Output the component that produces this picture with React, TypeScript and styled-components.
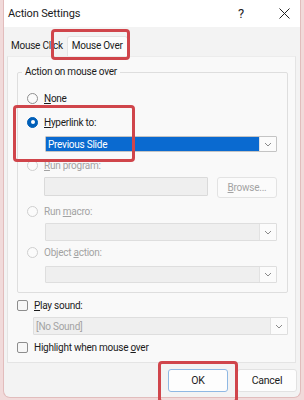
import React from 'react'
import styled, { createGlobalStyle } from 'styled-components'

const GlobalStyle = createGlobalStyle`
  html, body {
    margin: 0;
    padding: 0;
    background: #f1dada;
  }
  body {
    font-family: Roboto, "Noto Sans", sans-serif;
    font-size: 10px;
    letter-spacing: -0.25px;
    color: #1b1b1b;
  }
`

const Screen = styled.div`
  position: relative;
  width: 304px;
  height: 400px;
  box-sizing: border-box;
  padding-left: 3px;
  overflow: hidden;
  background: #f1dada;
`

const Window = styled.div`
  display: flex;
  flex-direction: column;
  width: 298px;
  height: 398px;
  box-sizing: border-box;
  background: #f3f3f3;
  border: 1px solid #e2bcbc;
  border-top: none;
  border-radius: 0 0 7px 7px;
  overflow: hidden;
`

const TitleBar = styled.div`
  display: flex;
  align-items: center;
  height: 27px;
  flex-shrink: 0;
  padding: 0 9px 0 4px;
  background: #ffffff;
  font-size: 11px;
  letter-spacing: -0.15px;
`

const Title = styled.div`
  flex: 1;
`

const TitleButton = styled.div<{ $gap?: number }>`
  display: flex;
  align-items: center;
  justify-content: center;
  width: 14px;
  height: 14px;
  margin-left: ${(p) => p.$gap ?? 0}px;
  font-size: 13px;
  color: #222;
`

const TabStrip = styled.div`
  display: flex;
  align-items: flex-end;
  gap: 3px;
  height: 29px;
  flex-shrink: 0;
  padding-left: 6px;
`

const Tab = styled.div<{ $active?: boolean }>`
  height: 19px;
  line-height: 18px;
  padding: 0 ${(p) => (p.$active ? 4 : 0)}px;
  background: ${(p) => (p.$active ? '#fcfcfc' : 'transparent')};
  border: 1px solid ${(p) => (p.$active ? '#e4e4e4' : 'transparent')};
  border-bottom: none;
  border-radius: 3px 3px 0 0;
`

const Panel = styled.div`
  display: flex;
  flex-direction: column;
  height: 307px;
  flex-shrink: 0;
  box-sizing: border-box;
  margin: 0 4px 0 3px;
  padding: 8px 7px 0 9px;
  background: #f9f9f9;
  border: 1px solid #e4e4e4;
  border-top-color: #ececec;
`

const Group = styled.fieldset`
  display: flex;
  flex-direction: column;
  margin: 0;
  padding: 0 10px 9px 9px;
  border: 1px solid #dedede;
  border-radius: 2px;
  min-width: 0;
`

const Legend = styled.legend`
  margin-left: -5px;
  padding: 0 3px;
  line-height: 14px;
`

const OptionRow = styled.div<{ $top: number; $indent?: number }>`
  display: flex;
  align-items: center;
  gap: 6px;
  height: 18px;
  margin-top: ${(p) => p.$top}px;
  margin-left: ${(p) => p.$indent ?? 0}px;
`

const Label = styled.span<{ $disabled?: boolean }>`
  color: ${(p) => (p.$disabled ? '#a3a3a3' : '#1b1b1b')};
  white-space: nowrap;
`

const Key = styled.span`
  text-decoration: underline;
  text-underline-offset: 1px;
`

const Radio = styled.span<{ $checked?: boolean; $disabled?: boolean }>`
  position: relative;
  width: 11px;
  height: 11px;
  flex-shrink: 0;
  box-sizing: border-box;
  border-radius: 50%;
  background: ${(p) => (p.$checked ? '#005fb8' : '#fbfbfb')};
  border: 1px solid
    ${(p) => (p.$checked ? '#005fb8' : p.$disabled ? '#cfcfcf' : '#8f8f8f')};

  &::after {
    content: '';
    display: ${(p) => (p.$checked ? 'block' : 'none')};
    position: absolute;
    left: 2.5px;
    top: 2.5px;
    width: 4px;
    height: 4px;
    border-radius: 50%;
    background: #ffffff;
  }
`

const Checkbox = styled.span`
  width: 11px;
  height: 11px;
  flex-shrink: 0;
  box-sizing: border-box;
  border: 1px solid #8d8d8d;
  border-radius: 2px;
  background: #f7f7f7;
`

const SelectBox = styled.div<{ $top: number; $height: number; $indent: number; $disabled?: boolean }>`
  display: flex;
  height: ${(p) => p.$height}px;
  box-sizing: border-box;
  margin-top: ${(p) => p.$top}px;
  margin-left: ${(p) => p.$indent}px;
  border: 1px solid ${(p) => (p.$disabled ? '#dedede' : '#c4c4c4')};
  background: ${(p) => (p.$disabled ? '#efefef' : '#ffffff')};
  border-radius: 1px;
`

const SelectValue = styled.div<{ $selected?: boolean; $disabled?: boolean }>`
  flex: 1;
  display: flex;
  align-items: center;
  padding-left: 2px;
  background: ${(p) => (p.$selected ? '#0a6ad0' : 'transparent')};
  color: ${(p) => (p.$selected ? '#ffffff' : p.$disabled ? '#a3a3a3' : '#1b1b1b')};
  white-space: nowrap;
`

const SelectArrow = styled.div`
  display: flex;
  align-items: center;
  justify-content: center;
  width: 16px;
  background: #fbfbfb;
  border-left: 1px solid #e2e2e2;
`

const ProgramRow = styled.div`
  display: flex;
  align-items: flex-start;
  gap: 9px;
  margin-top: 3px;
  margin-left: 17px;
`

const TextInput = styled.div`
  flex: 1;
  height: 19px;
  box-sizing: border-box;
  background: #efefef;
  border: 1px solid #dadada;
  border-radius: 1px;
`

const BrowseButton = styled.div`
  display: flex;
  align-items: center;
  justify-content: center;
  width: 60px;
  height: 21px;
  box-sizing: border-box;
  background: #fbfbfb;
  border: 1px solid #e3e3e3;
  border-radius: 3px;
  color: #a3a3a3;
`

const Footer = styled.div`
  flex: 1;
  display: flex;
  justify-content: flex-end;
  gap: 9px;
  padding: 6px 3px 0 0;
`

const DialogButton = styled.div<{ $primary?: boolean }>`
  display: flex;
  align-items: center;
  justify-content: center;
  width: 60px;
  height: 23px;
  box-sizing: border-box;
  background: #fdfdfd;
  border: 1px solid ${(p) => (p.$primary ? '#8fb8e3' : '#e2e2e2')};
  border-radius: 3px;
  font-size: 10.5px;
`

const Highlight = styled.div<{ $x: number; $y: number; $w: number; $h: number }>`
  position: absolute;
  left: ${(p) => p.$x}px;
  top: ${(p) => p.$y}px;
  width: ${(p) => p.$w}px;
  height: ${(p) => p.$h}px;
  box-sizing: border-box;
  border: 3px solid #d0454b;
  border-radius: 4px;
  pointer-events: none;
`

function Chevron() {
  return (
    <svg width="8" height="5" viewBox="0 0 8 5">
      <path d="M1 1 L4 4 L7 1" fill="none" stroke="#8a8a8a" strokeWidth="1" />
    </svg>
  )
}

function Select({
  top,
  height,
  indent,
  value,
  selected,
  disabled,
}: {
  top: number
  height: number
  indent: number
  value?: string
  selected?: boolean
  disabled?: boolean
}) {
  return (
    <SelectBox $top={top} $height={height} $indent={indent} $disabled={disabled}>
      <SelectValue $selected={selected} $disabled={disabled}>
        {value}
      </SelectValue>
      <SelectArrow>
        <Chevron />
      </SelectArrow>
    </SelectBox>
  )
}

export default function App() {
  return (
    <Screen>
      <GlobalStyle />
      <Window>
        <TitleBar>
          <Title>Action Settings</Title>
          <TitleButton>?</TitleButton>
          <TitleButton $gap={29}>
            <svg width="11" height="11" viewBox="0 0 11 11">
              <path d="M0.5 0.5 L10.5 10.5 M10.5 0.5 L0.5 10.5" stroke="#222" strokeWidth="1" />
            </svg>
          </TitleButton>
        </TitleBar>

        <TabStrip>
          <Tab>Mouse Click</Tab>
          <Tab $active>Mouse Over</Tab>
        </TabStrip>

        <Panel>
          <Group>
            <Legend>Action on mouse over</Legend>

            <OptionRow $top={10}>
              <Radio />
              <Label>
                <Key>N</Key>one
              </Label>
            </OptionRow>

            <OptionRow $top={6}>
              <Radio $checked />
              <Label>
                <Key>H</Key>yperlink to:
              </Label>
            </OptionRow>
            <Select top={5} height={16} indent={18} value="Previous Slide" selected />

            <OptionRow $top={4}>
              <Radio $disabled />
              <Label $disabled>
                <Key>R</Key>un program:
              </Label>
            </OptionRow>
            <ProgramRow>
              <TextInput />
              <BrowseButton>
                <span>
                  <Key>B</Key>rowse...
                </span>
              </BrowseButton>
            </ProgramRow>

            <OptionRow $top={4}>
              <Radio $disabled />
              <Label $disabled>
                Run <Key>m</Key>acro:
              </Label>
            </OptionRow>
            <Select top={3} height={18} indent={18} disabled />

            <OptionRow $top={2}>
              <Radio $disabled />
              <Label $disabled>
                Object <Key>a</Key>ction:
              </Label>
            </OptionRow>
            <Select top={5} height={17} indent={18} disabled />
          </Group>

          <OptionRow $top={3}>
            <Checkbox />
            <Label>
              <Key>P</Key>lay sound:
            </Label>
          </OptionRow>
          <Select top={3} height={18} indent={16} value="[No Sound]" disabled />

          <OptionRow $top={3}>
            <Checkbox />
            <Label>
              Highlight when mouse <Key>o</Key>ver
            </Label>
          </OptionRow>
        </Panel>

        <Footer>
          <DialogButton $primary>OK</DialogButton>
          <DialogButton>Cancel</DialogButton>
        </Footer>
      </Window>

      <Highlight $x={51} $y={29} $w={79} $h={31} />
      <Highlight $x={13} $y={105} $w={122} $h={57} />
      <Highlight $x={158} $y={361} $w={80} $h={42} />
    </Screen>
  )
}
